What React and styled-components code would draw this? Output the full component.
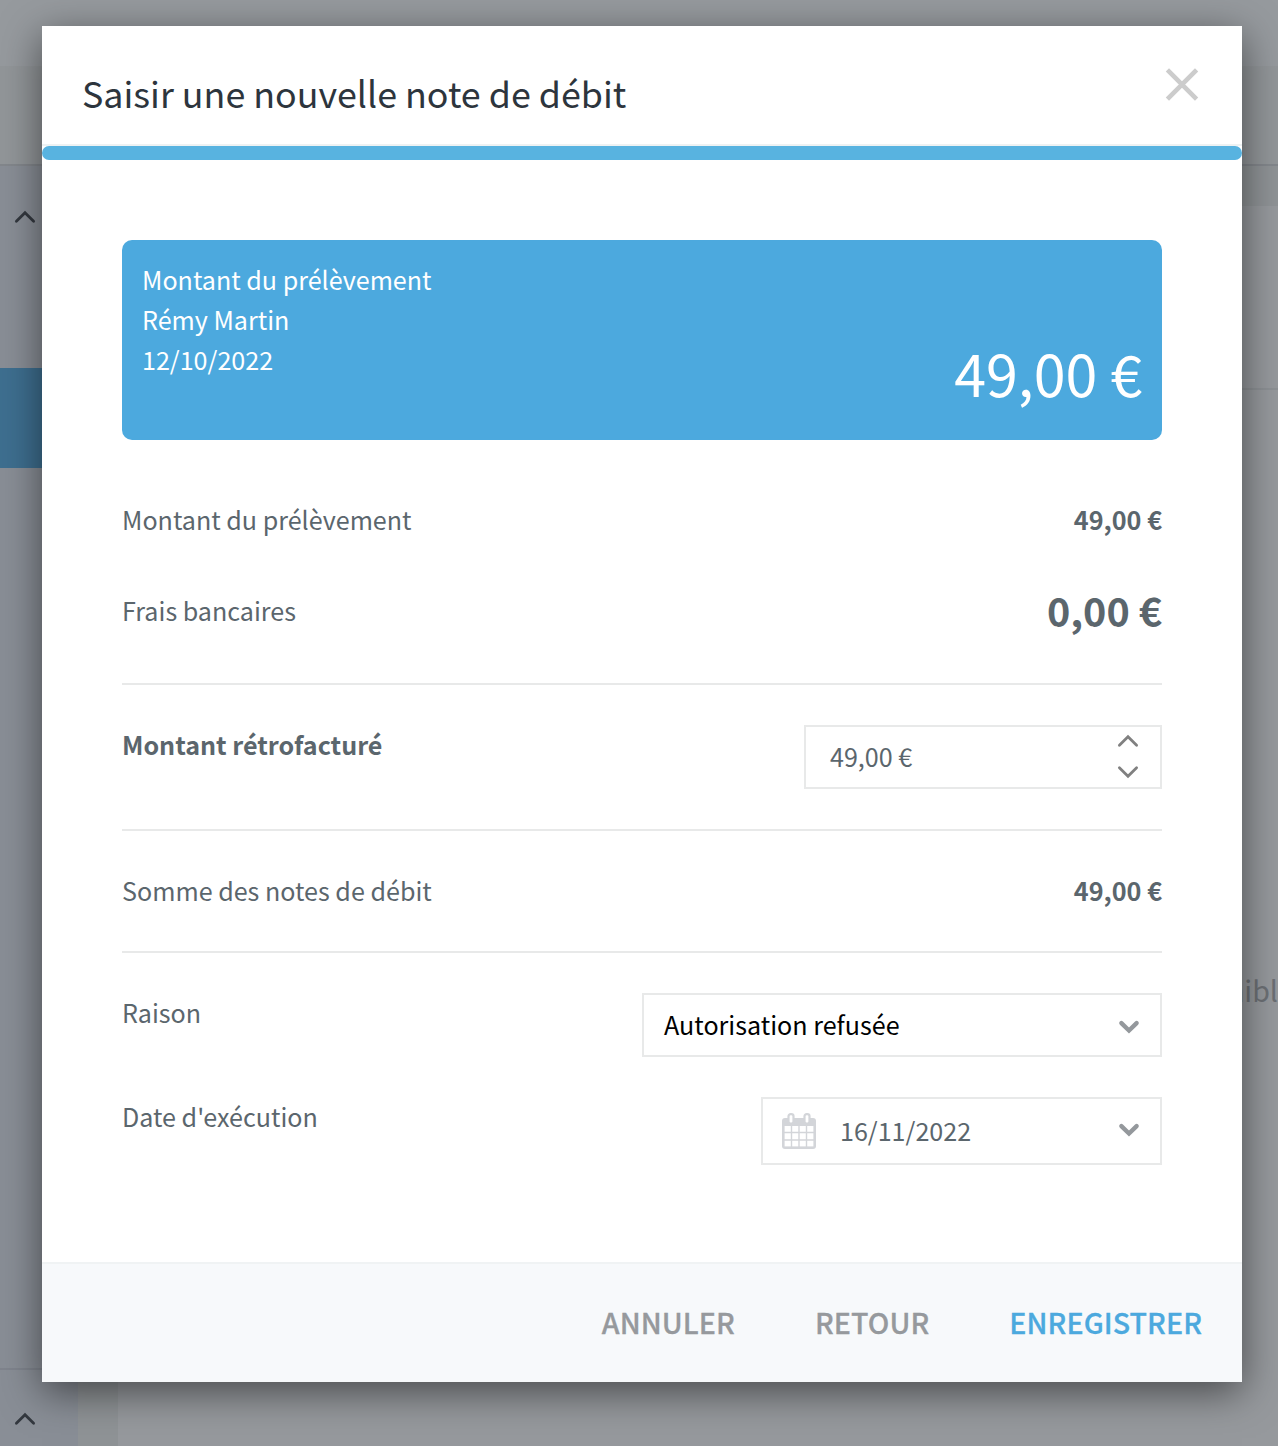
import React from 'react';
import styled, { createGlobalStyle } from 'styled-components';

const GlobalStyle = createGlobalStyle`
  * {
    box-sizing: border-box;
  }
  body {
    margin: 0;
    font-family: "Noto Sans CJK JP", "Noto Sans CJK SC", sans-serif;
    font-size: 25.1px;
    color: #5b666d;
  }
`

// page behind the dialog

const Page = styled.div`
  position: relative;
  display: flex;
  flex-direction: column;
  width: 1278px;
  height: 1446px;
  overflow: hidden;
  background: #96999d;
`

const TopBar = styled.div`
  height: 66px;
  background: #969a9e;
`

const SubBar = styled.div`
  height: 100px;
  background: #929699;
  border-bottom: 2px solid #83878c;
`

const Columns = styled.div`
  flex: 1;
  display: flex;
`

const Sidebar = styled.div`
  display: flex;
  flex-direction: column;
  width: 78px;
  background: #898e96;
`

const SidebarGroup = styled.div`
  height: ${props => props.$height}px;
  padding: ${props => props.$top}px 0 0 14px;
  background: ${props => props.$active ? '#3e6f90' : 'transparent'};
  border-top: ${props => props.$line ? '2px solid #7f848d' : 'none'};
  color: #33383f;
  line-height: 0;
`

const Gutter = styled.div`
  width: 40px;
  background: #8f9396;
`

const Content = styled.div`
  flex: 1;
  display: flex;
  flex-direction: column;
`

const ContentHead = styled.div`
  height: 40px;
  background: #8f9396;
`

const ContentFilter = styled.div`
  height: 184px;
  border-bottom: 2px solid #8d9195;
`

const EmptyMessage = styled.div`
  padding: 577px 0 0 0;
  text-align: right;
  font-size: 28.6px;
  line-height: 46px;
  color: #6c7075;
  white-space: nowrap;
`

// dialog

const Overlay = styled.div`
  position: absolute;
  top: 0;
  left: 0;
  width: 100%;
  height: 100%;
  padding: 26px 36px 64px 42px;
`

const Modal = styled.div`
  display: flex;
  flex-direction: column;
  width: 1200px;
  height: 1356px;
  background: #fff;
  box-shadow: 0 10px 38px rgba(0, 0, 0, .52);
`

const ModalHeader = styled.div`
  display: flex;
  justify-content: space-between;
  height: 120px;
  padding: 40px 43px 0 40px;
  border-bottom: 2px solid #eef2f3;
`

const Title = styled.h1`
  margin: 0;
  font-size: 35.8px;
  font-weight: 400;
  line-height: 53px;
  color: #2d353d;
`

const CloseButton = styled.button`
  width: 34px;
  height: 34px;
  margin-top: 2px;
  padding: 0;
  border: 0;
  background: none;
  line-height: 0;
`

const ProgressBar = styled.div`
  height: 14px;
  border-radius: 7px;
  background: #58b3e0;
`

const ModalBody = styled.div`
  flex: 1;
  padding: 80px 80px 0;
`

const Card = styled.div`
  display: flex;
  justify-content: space-between;
  height: 200px;
  padding: 19px 20px 0;
  border-radius: 10px;
  background: #4ca9de;
  color: #fff;
  line-height: 40px;
`

const CardAmount = styled.div`
  padding-top: 94px;
  font-size: 57.3px;
`

const Section = styled.div`
  display: flex;
  flex-direction: column;
  gap: ${props => props.$gap || 0}px;
  padding: ${props => props.$pad};
  border-top: ${props => props.$plain ? 'none' : '2px solid #e8e9e9'};
`

const Row = styled.div`
  display: flex;
  justify-content: space-between;
  align-items: ${props => props.$center ? 'center' : 'flex-start'};
  line-height: 40px;
`

const Label = styled.label`
  margin-top: ${props => props.$raised ? '-1px' : '0'};
  font-weight: ${props => props.$bold ? 700 : 400};
`

const Amount = styled.span`
  font-size: ${props => props.$large ? '39.5px' : '25.2px'};
  font-weight: 700;
  line-height: ${props => props.$large ? '60px' : '40px'};
`

const Field = styled.div`
  display: flex;
  align-items: center;
  justify-content: space-between;
  width: ${props => props.$width}px;
  height: ${props => props.$height || 64}px;
  padding: 0 20px 0 ${props => props.$left || 20}px;
  border: 2px solid #e8e9e9;
  color: ${props => props.$color || '#5b666d'};
`

const FieldText = styled.span`
  flex: 1;
  margin-top: -2px;
  padding-left: ${props => props.$indent || 0}px;
`

const Spinner = styled.div`
  display: flex;
  flex-direction: column;
  gap: 17px;
  margin: 0 1px 2px 0;
  color: #808080;
  line-height: 0;
`

const Arrow = styled.svg`
  margin: ${props => props.$low ? '3px 0 0' : '0 0 2px'};
`

const ModalFooter = styled.div`
  display: flex;
  justify-content: flex-end;
  gap: 80px;
  height: 120px;
  padding: 38px 40px 0;
  border-top: 2px solid #f0f3f4;
  background: #f7f9fb;
`

const FooterButton = styled.button`
  height: 40px;
  padding: 0;
  border: 0;
  background: none;
  font-family: inherit;
  font-size: 28.6px;
  font-weight: 500;
  line-height: 40px;
  letter-spacing: .08px;
  -webkit-text-stroke: .3px;
  color: ${props => props.$primary ? '#4ca9de' : '#96999d'};
`

const Chevron = ({ up }) => (
  <svg width="22" height="14" viewBox="0 0 22 14" fill="none" stroke="currentColor" strokeWidth="2.8" strokeLinecap="round">
    <path d={up ? 'M2.4 11.2L11 2.8L19.6 11.2' : 'M2.4 2.8L11 11.2L19.6 2.8'} />
  </svg>
)

const SelectArrow = ({ low }) => (
  <Arrow $low={low} width="22" height="16" viewBox="0 0 22 16" fill="none" stroke="#94989c" strokeWidth="4.4" strokeLinecap="round">
    <path d="M3.4 4.1L11 11.5L18.6 4.1" />
  </Arrow>
)

const CloseIcon = () => (
  <svg width="34" height="34" viewBox="0 0 34 34" stroke="#ccc" strokeWidth="4.6">
    <path d="M2.4 1.9L31.6 31.1M31.6 1.9L2.4 31.1" />
  </svg>
)

const CalendarIcon = () => (
  <svg width="34" height="36" viewBox="0 0 34 36" fill="none">
    <path d="M3 5H31Q34 5 34 8V33Q34 36 31 36H3Q0 36 0 33V8Q0 5 3 5Z" fill="#d3d5d9" />
    <path d="M2.6 13H31.4V33.4H2.6Z" fill="#fff" />
    <path d="M9.5 13V34M17 13V34M24.5 13V34M2 19.5H32M2 27H32" stroke="#d3d5d9" strokeWidth="1.4" />
    <rect x="6.5" y="1.1" width="5" height="9.6" rx="2.2" fill="#fff" stroke="#d3d5d9" strokeWidth="2.2" />
    <rect x="22.5" y="1.1" width="5" height="9.6" rx="2.2" fill="#fff" stroke="#d3d5d9" strokeWidth="2.2" />
  </svg>
)

function Background() {
  return (
    <>
      <TopBar />
      <SubBar />
      <Columns>
        <Sidebar>
          <SidebarGroup $height={202} $top={44}><Chevron up /></SidebarGroup>
          <SidebarGroup $height={100} $top={0} $active />
          <SidebarGroup $height={900} $top={0} />
          <SidebarGroup $height={78} $top={42} $line><Chevron up /></SidebarGroup>
        </Sidebar>
        <Gutter />
        <Content>
          <ContentHead />
          <ContentFilter />
          <EmptyMessage>Aucune donnée disponibl</EmptyMessage>
        </Content>
      </Columns>
    </>
  )
}

function App() {
  return (
    <Page>
      <GlobalStyle />
      <Background />
      <Overlay>
        <Modal>
          <ModalHeader>
            <Title>Saisir une nouvelle note de débit</Title>
            <CloseButton><CloseIcon /></CloseButton>
          </ModalHeader>
          <ProgressBar />
          <ModalBody>
            <Card>
              <div>
                <div>Montant du prélèvement</div>
                <div>Rémy Martin</div>
                <div>12/10/2022</div>
              </div>
              <CardAmount>49,00 €</CardAmount>
            </Card>
            <Section $plain $gap={41} $pad="59px 0 43px">
              <Row>
                <Label>Montant du prélèvement</Label>
                <Amount>49,00 €</Amount>
              </Row>
              <Row $center>
                <Label>Frais bancaires</Label>
                <Amount $large>0,00 €</Amount>
              </Row>
            </Section>
            <Section $pad="40px 0">
              <Row>
                <Label $bold $raised>Montant rétrofacturé</Label>
                <Field $width={358}>
                  <FieldText $indent={4}>49,00 €</FieldText>
                  <Spinner>
                    <Chevron up />
                    <Chevron />
                  </Spinner>
                </Field>
              </Row>
            </Section>
            <Section $pad="39px 0 41px">
              <Row>
                <Label>Somme des notes de débit</Label>
                <Amount>49,00 €</Amount>
              </Row>
            </Section>
            <Section $pad="40px 0 0" $gap={40}>
              <Row>
                <Label $raised>Raison</Label>
                <Field $width={520} $color="#000">
                  <FieldText>Autorisation refusée</FieldText>
                  <SelectArrow low />
                </Field>
              </Row>
              <Row>
                <Label $raised>Date d'exécution</Label>
                <Field $width={401} $height={68} $left={19}>
                  <CalendarIcon />
                  <FieldText $indent={24}>16/11/2022</FieldText>
                  <SelectArrow />
                </Field>
              </Row>
            </Section>
          </ModalBody>
          <ModalFooter>
            <FooterButton>ANNULER</FooterButton>
            <FooterButton>RETOUR</FooterButton>
            <FooterButton $primary>ENREGISTRER</FooterButton>
          </ModalFooter>
        </Modal>
      </Overlay>
    </Page>
  )
}

export default App;
